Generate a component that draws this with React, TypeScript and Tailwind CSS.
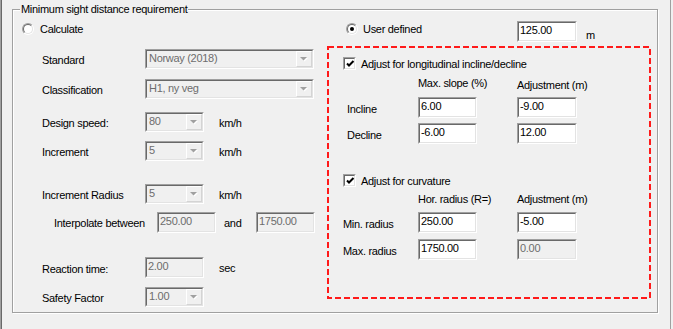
import React from "react";

const T = "text-[11px] leading-[13px] tracking-[-0.3px] whitespace-nowrap";
const TB = `${T} text-black`;

function Radio({ checked }: { checked?: boolean }) {
  return (
    <div className="w-[12px] h-[12px] rounded-full border border-t-[#a0a0a0] border-l-[#a0a0a0] border-b-white border-r-white shrink-0">
      <div className="w-full h-full rounded-full border border-t-[#696969] border-l-[#696969] border-b-[#e3e3e3] border-r-[#e3e3e3] bg-white flex items-center justify-center">
        {checked && <div className="w-[4px] h-[4px] rounded-full bg-black" />}
      </div>
    </div>
  );
}

function Check() {
  return (
    <div className="w-[13px] h-[13px] border border-t-[#a0a0a0] border-l-[#a0a0a0] border-b-white border-r-white shrink-0">
      <div className="w-full h-full border border-t-[#696969] border-l-[#696969] border-b-[#e3e3e3] border-r-[#e3e3e3] bg-white">
        <svg width="11" height="11" viewBox="0 0 11 11">
          <polyline points="2,4.5 4,6.5 8.5,2" fill="none" stroke="#000" strokeWidth="2" />
        </svg>
      </div>
    </div>
  );
}

function Field({ w, value, disabled }: { w: string; value: string; disabled?: boolean }) {
  return (
    <div className={`${w} h-[21px] border border-t-[#a0a0a0] border-l-[#a0a0a0] border-b-white border-r-white shrink-0`}>
      <div
        className={`w-full h-full border border-t-[#696969] border-l-[#696969] border-b-[#e3e3e3] border-r-[#e3e3e3] flex items-center pl-[1px] pb-[2px] ${
          disabled ? "bg-[#f0f0f0]" : "bg-white"
        }`}
      >
        <span className={`${T} ${disabled ? "text-[#6d6d6d]" : "text-black"}`}>{value}</span>
      </div>
    </div>
  );
}

function Combo({ w, value }: { w: string; value: string }) {
  return (
    <div className={`${w} h-[20px] border border-t-[#a0a0a0] border-l-[#a0a0a0] border-b-white border-r-white shrink-0`}>
      <div className="w-full h-full border border-t-[#696969] border-l-[#696969] border-b-[#e3e3e3] border-r-[#e3e3e3] bg-[#f0f0f0] flex items-center">
        <span className={`${T} text-[#6d6d6d] pl-[2px] pb-[1px] flex-1`}>{value}</span>
        <div className="w-[16px] h-full border border-t-white border-l-white border-b-[#d4d4d4] border-r-[#d4d4d4] flex items-center justify-center">
          <svg width="8" height="5" viewBox="0 0 8 5">
            <polygon points="1,1 8,1 4.5,4.5" fill="#ffffff" />
            <polygon points="0,0 7,0 3.5,3.5" fill="#a0a0a0" />
          </svg>
        </div>
      </div>
    </div>
  );
}

function LRow({ mt, label, children, h }: { mt: string; label: string; children: React.ReactNode; h: string }) {
  return (
    <div className={`flex items-center ${mt} ${h} pl-[29px]`}>
      <span className={`${TB} w-[103px] pt-[3px]`}>{label}</span>
      {children}
    </div>
  );
}

export default function App() {
  return (
    <div className="w-[673px] h-[329px] bg-[#f0f0f0] font-['Liberation_Sans',Arial,sans-serif] flex overflow-hidden">
      <div className="w-[1px] h-full bg-[#a0a0a0]" />
      <div className="w-[1px] h-full bg-[#696969]" />
      <div className="flex-1 relative">
        {/* group box */}
        <div className="ml-[10px] mt-[9px] w-[646px] h-[304px] border border-[#a0a0a0] shadow-[1px_1px_0_#fff,inset_1px_1px_0_#fff] relative flex">
          <div className={`${TB} absolute left-[7px] top-[-7px] px-[1px] bg-[#f0f0f0]`}>Minimum sight distance requirement</div>

          {/* left column */}
          <div className="w-[314px] flex flex-col">
            <div className="flex items-center mt-[12px] h-[13px] pl-[9px]">
              <Radio />
              <span className={`${TB} ml-[6px] pt-[2px]`}>Calculate</span>
            </div>
            <LRow mt="mt-[14px]" h="h-[20px]" label="Standard">
              <Combo w="w-[169px]" value="Norway (2018)" />
            </LRow>
            <LRow mt="mt-[10px]" h="h-[20px]" label="Classification">
              <Combo w="w-[169px]" value="H1, ny veg" />
            </LRow>
            <LRow mt="mt-[13px]" h="h-[20px]" label="Design speed:">
              <Combo w="w-[59px]" value="80" />
              <span className={`${TB} ml-[15px] pt-[2px]`}>km/h</span>
            </LRow>
            <LRow mt="mt-[9px]" h="h-[20px]" label="Increment">
              <Combo w="w-[59px]" value="5" />
              <span className={`${TB} ml-[15px] pt-[2px]`}>km/h</span>
            </LRow>
            <LRow mt="mt-[23px]" h="h-[20px]" label="Increment Radius">
              <Combo w="w-[59px]" value="5" />
              <span className={`${TB} ml-[15px] pt-[2px]`}>km/h</span>
            </LRow>
            <div className="flex items-center mt-[8px] h-[21px] pl-[41px]">
              <span className={`${TB} w-[103px] pt-[2px]`}>Interpolate between</span>
              <Field w="w-[59px]" value="250.00" disabled />
              <span className={`${TB} ml-[8px] w-[32px] pt-[2px]`}>and</span>
              <Field w="w-[59px]" value="1750.00" disabled />
            </div>
            <LRow mt="mt-[24px]" h="h-[21px]" label="Reaction time:">
              <Field w="w-[59px]" value="2.00" disabled />
              <span className={`${TB} ml-[15px] pt-[2px]`}>sec</span>
            </LRow>
            <LRow mt="mt-[9px]" h="h-[20px]" label="Safety Factor">
              <Combo w="w-[59px]" value="1.00" />
            </LRow>
          </div>

          {/* right column */}
          <div className="flex flex-col">
            <div className="flex items-start mt-[11px] h-[22px]">
              <div className="ml-[19px] mt-[2px]">
                <Radio checked />
              </div>
              <span className={`${TB} ml-[5px] mt-[2px] w-[154px]`}>User defined</span>
              <Field w="w-[60px]" value="125.00" />
              <span className={`${TB} ml-[9px] mt-[8px]`}>m</span>
            </div>

            <div className="relative mt-[3px] w-[324px] h-[253px] flex flex-col">
              <svg className="absolute inset-0 pointer-events-none" width="324" height="253">
                <rect x="1" y="1" width="322" height="251" fill="none" stroke="#ff1a1a" strokeWidth="2" strokeDasharray="6 3" />
              </svg>
              <div className="flex items-center mt-[11px] h-[13px] pl-[16px]">
                <Check />
                <span className={`${TB} ml-[5px] pt-[1px]`}>Adjust for longitudinal incline/decline</span>
              </div>
              <div className="flex items-start mt-[7px] h-[13px] pl-[91px]">
                <span className={`${TB} w-[99px]`}>Max. slope (%)</span>
                <span className={`${TB} mt-[2px]`}>Adjustment (m)</span>
              </div>
              <div className="flex items-center mt-[7px] h-[21px] pl-[20px]">
                <span className={`${TB} w-[71px] pt-[3px]`}>Incline</span>
                <Field w="w-[59px]" value="6.00" />
                <div className="w-[40px]" />
                <Field w="w-[60px]" value="-9.00" />
              </div>
              <div className="flex items-center mt-[5px] h-[21px] pl-[20px]">
                <span className={`${TB} w-[71px] pt-[3px]`}>Decline</span>
                <Field w="w-[59px]" value="-6.00" />
                <div className="w-[40px]" />
                <Field w="w-[60px]" value="12.00" />
              </div>
              <div className="flex items-center mt-[30px] h-[13px] pl-[16px]">
                <Check />
                <span className={`${TB} ml-[5px] pt-[1px]`}>Adjust for curvature</span>
              </div>
              <div className="flex items-start mt-[6px] h-[13px] pl-[91px]">
                <span className={`${TB} w-[99px]`}>Hor. radius (R=)</span>
                <span className={TB}>Adjustment (m)</span>
              </div>
              <div className="flex items-center mt-[6px] h-[21px] pl-[16px]">
                <span className={`${TB} w-[75px] pt-[3px]`}>Min. radius</span>
                <Field w="w-[59px]" value="250.00" />
                <div className="w-[40px]" />
                <Field w="w-[60px]" value="-5.00" />
              </div>
              <div className="flex items-center mt-[6px] h-[21px] pl-[16px]">
                <span className={`${TB} w-[75px] pt-[3px]`}>Max. radius</span>
                <Field w="w-[59px]" value="1750.00" />
                <div className="w-[40px]" />
                <Field w="w-[60px]" value="0.00" disabled />
              </div>
            </div>
          </div>
        </div>
      </div>
      <div className="w-[1px] h-full bg-[#a0a0a0]" />
      <div className="w-[2px] h-full bg-[#f0f0f0]" />
    </div>
  );
}
